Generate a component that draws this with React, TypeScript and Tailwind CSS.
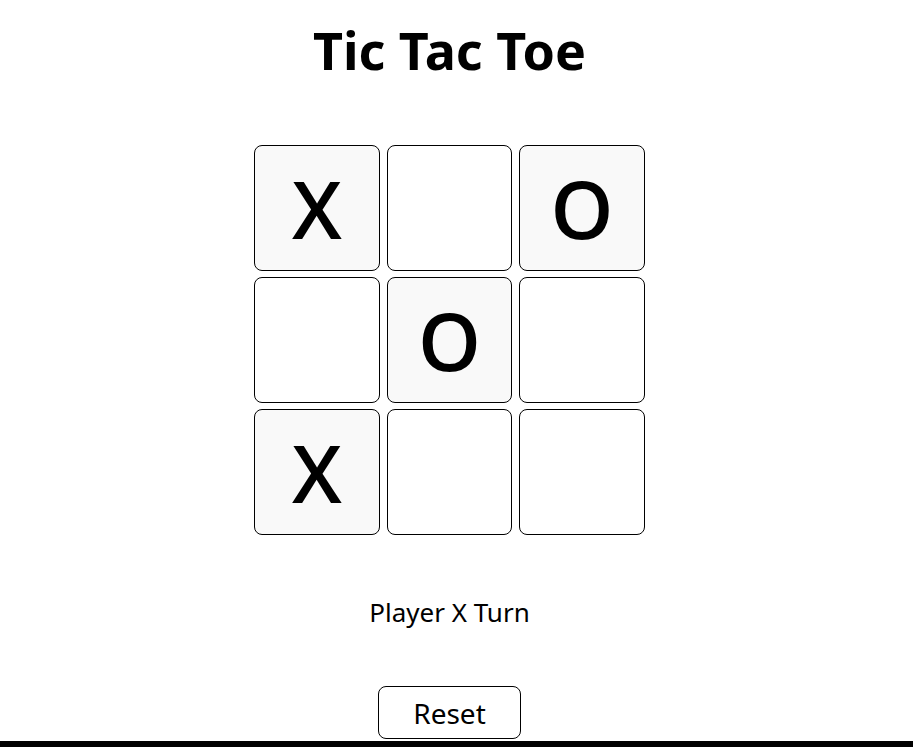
import React, { useState } from 'react';

type Mark = 'X' | 'O' | null;

export default function App() {
  const [board, setBoard] = useState<Mark[]>(['X', null, 'O', null, 'O', null, 'X', null, null]);
  const [turn, setTurn] = useState<'X' | 'O'>('X');

  const play = (i: number) => {
    if (board[i]) return;
    const next = board.slice();
    next[i] = turn;
    setBoard(next);
    setTurn(turn === 'X' ? 'O' : 'X');
  };

  const reset = () => {
    setBoard([null, null, null, null, null, null, null, null, null]);
    setTurn('X');
  };

  return (
    <div className="min-h-[747px] flex flex-col bg-white text-black" style={{ fontFamily: '"Noto Sans", sans-serif' }}>
      <div className="w-[899px] flex flex-col items-center flex-1">
        <h1 className="mt-[20px] text-[52px] font-bold leading-[60px]">Tic Tac Toe</h1>
        <div className="mt-[65px] grid grid-cols-[126px_125px_126px] gap-x-[7px] gap-y-[6px]">
          {board.map((cell, i) => (
            <button
              key={i}
              onClick={() => play(i)}
              className={`h-[126px] rounded-lg border border-black flex items-center justify-center font-['Open_Sans',sans-serif] text-[80px] font-semibold leading-none ${
                cell ? 'bg-[#f9f9f9]' : 'bg-white'
              }`}
            >
              {cell}
            </button>
          ))}
        </div>
        <p className="mt-[61px] text-[26px] leading-[32px]">Player {turn} Turn</p>
        <button
          onClick={reset}
          className="mt-[58px] w-[143px] h-[53px] rounded-lg border border-black text-[28px] leading-none bg-white"
        >
          Reset
        </button>
      </div>
      <div className="h-[6px] bg-black"></div>
    </div>
  );
}
